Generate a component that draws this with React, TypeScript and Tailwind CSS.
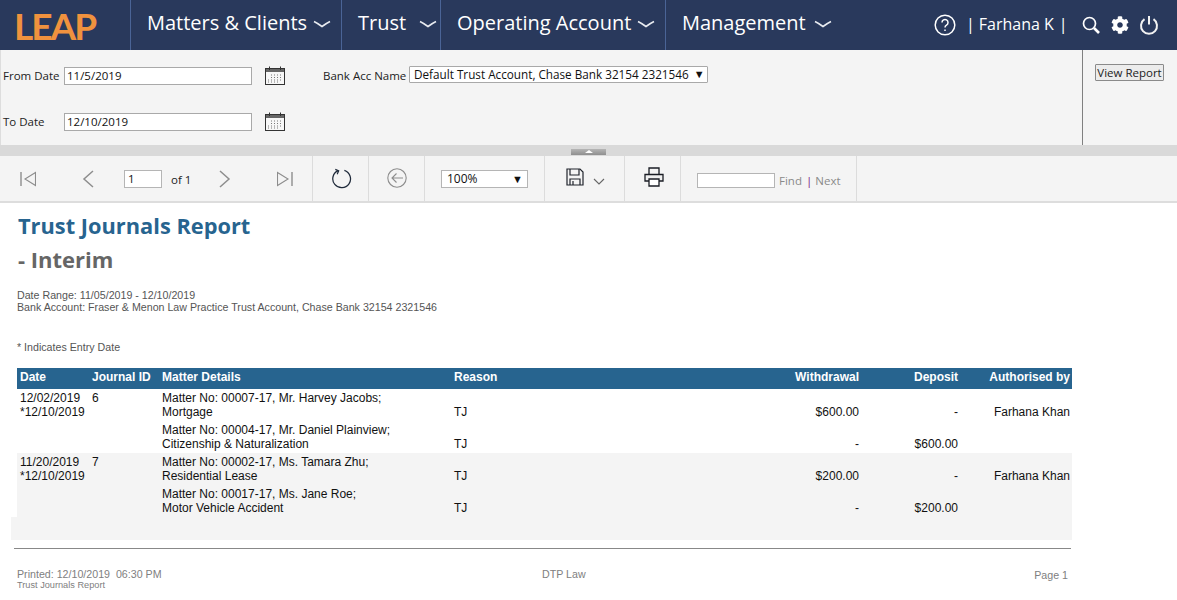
import { FaCog } from "react-icons/fa";

const navFont = "font-['Open_Sans',sans-serif]";
const reportFont = "font-['Liberation_Sans',Arial,sans-serif]";

function Chevron({ className }: { className?: string }) {
  return (
    <svg viewBox="0 0 18 8" fill="none" className={className}>
      <path d="M1 1.5 C4 3 7 5 9 6.5 C11 5 14 3 17 1.5" stroke="currentColor" strokeWidth="1.6" />
    </svg>
  );
}

function NavItem({ label, width, labelWidth, gap }: { label: string; width: string; labelWidth: string; gap: string }) {
  return (
    <div className={`flex h-full items-center border-l border-[#4a6496] pb-[5px] pl-[16px] ${width}`}>
      <span className={`text-[20px] leading-none whitespace-nowrap text-white ${labelWidth}`}>{label}</span>
      <Chevron className={`mt-[3px] h-[8px] w-[18px] text-[#e8ebf0] ${gap}`} />
    </div>
  );
}

function CalendarIcon({ className }: { className?: string }) {
  return (
    <svg viewBox="0 0 20 19" className={className}>
      <rect x="0.5" y="2.5" width="19" height="16" fill="#f7f7f7" stroke="#333" />
      <rect x="1" y="3" width="18" height="3" fill="#666" />
      <path d="M4.5 0.5v3.5M15.5 0.5v3.5" stroke="#333" />
      <path d="M6 9h1M9 9h1M12 9h1M15 9h1M6 11.500h1M9 11.500h1M12 11.500h1M15 11.500h1M3 14h1M6 14h1M9 14h1M12 14h1M15 14h1M3 16h1M6 16h1M9 16h1M12 16h1" stroke="#777" />
    </svg>
  );
}

function FilterPanel() {
  return (
    <div className={`flex h-[95px] bg-[#f4f4f4] ${navFont} text-[11.5px] text-[#222]`}>
      <div className="flex w-[1082px] border-l border-[#dddddd]">
        <div className="flex flex-col gap-[29px] pt-[17px] pl-[2px]">
          <div className="flex h-[17px] items-center">
            <span className="w-[61px] whitespace-nowrap">From Date</span>
            <div className="flex h-[18px] w-[188px] items-center border border-[#a9a9a9] bg-white pl-[2px] text-[#111]">11/5/2019</div>
            <CalendarIcon className="ml-[13px] h-[19px] w-[20px]" />
          </div>
          <div className="flex h-[17px] items-center">
            <span className="w-[61px] whitespace-nowrap">To Date</span>
            <div className="flex h-[18px] w-[188px] items-center border border-[#a9a9a9] bg-white pl-[2px] text-[#111]">12/10/2019</div>
            <CalendarIcon className="ml-[13px] h-[19px] w-[20px]" />
          </div>
        </div>
        <div className="mt-[16px] ml-[38px] flex h-[17px] items-center">
          <span className="mt-[2px] w-[86px] whitespace-nowrap">Bank Acc Name</span>
          <div className="flex h-[17px] w-[299px] items-center rounded-[1px] border border-[#a9a9a9] bg-white pl-[4px] text-[11.72px] whitespace-nowrap text-[#111]">
            Default Trust Account, Chase Bank 32154 2321546
            <span className="mb-[2px] ml-[5px] text-[11px] leading-none">▼</span>
          </div>
        </div>
      </div>
      <div className="flex flex-1 border-l border-[#808080] pt-[14px] pl-[12px]">
        <div className="flex h-[17px] w-[69px] items-center justify-center rounded-[1px] border border-[#8a8a8a] bg-[#ececec] whitespace-nowrap text-[11.5px] text-[#222]">View Report</div>
      </div>
    </div>
  );
}

function Splitter() {
  return (
    <div className="flex h-[11px] justify-center bg-[#d9d9d9] pt-[4px]">
      <div className="flex h-[6px] w-[35px] justify-center bg-gradient-to-b from-[#b5b5b5] to-[#8f8f8f] pt-[1px]">
        <div className="h-0 w-0 border-x-[4px] border-b-[3px] border-x-transparent border-b-white" />
      </div>
    </div>
  );
}

function Section({ width, children, className }: { width: string; children: React.ReactNode; className?: string }) {
  return <div className={`flex h-full items-center border-r border-[#dcdcdc] ${width} ${className ?? ""}`}>{children}</div>;
}

function Toolbar() {
  return (
    <div className={`flex h-[47px] border-b-2 border-[#dddddd] bg-[#f4f4f4] ${navFont} text-[11.5px] text-[#222]`}>
      <Section width="w-[313px]">
        <svg viewBox="0 0 16 16" fill="none" stroke="#8d8d8d" className="ml-[20px] h-[16px] w-[16px]">
          <path d="M1 1v14" strokeWidth="1.4" />
          <path d="M15.500 1.500 5 8l10.500 6.500z" strokeWidth="1.1" />
        </svg>
        <svg viewBox="0 0 12 18" fill="none" stroke="#8d8d8d" strokeWidth="1.5" className="ml-[46px] h-[18px] w-[12px]">
          <path d="M11 1 2 9l9 8" />
        </svg>
        <div className="mt-[1px] ml-[30px] flex h-[18px] w-[38px] items-center border border-[#b5b5b5] bg-white pl-[3px] text-[#111]">1</div>
        <span className="mt-[2px] ml-[9px] whitespace-nowrap">of 1</span>
        <svg viewBox="0 0 12 18" fill="none" stroke="#8d8d8d" strokeWidth="1.5" className="ml-[28px] h-[18px] w-[12px]">
          <path d="m1 1 9 8-9 8" />
        </svg>
        <svg viewBox="0 0 16 16" fill="none" stroke="#8d8d8d" className="ml-[46px] h-[16px] w-[16px]">
          <path d="M15 1v14" strokeWidth="1.4" />
          <path d="M.5 1.500 11 8 .5 14.500z" strokeWidth="1.1" />
        </svg>
      </Section>
      <Section width="w-[56px]" className="justify-center pb-[1px] pl-[2px]">
        <svg viewBox="0 0 22 22" fill="none" stroke="#1f2a3a" strokeWidth="1.3" className="h-[21px] w-[21px]">
          <path d="M7.500 2.800A9.300 9.300 0 1 0 14 2.500" />
          <path d="M4.500 1.500 8 3 6.500 6.500" />
        </svg>
      </Section>
      <Section width="w-[56px]" className="justify-center pb-[2px] pl-[1px]">
        <svg viewBox="0 0 20 20" fill="none" stroke="#8d8d8d" strokeWidth="1.1" className="h-[20px] w-[20px]">
          <circle cx="10" cy="10" r="9.200" />
          <path d="M16 10H5M9.500 5.500 5 10l4.500 4.500" />
        </svg>
      </Section>
      <Section width="w-[120px]" className="pl-[16px]">
        <div className="mt-[1px] flex h-[18px] w-[87px] items-center justify-between border border-[#b5b5b5] bg-white pr-[4px] pl-[5px] text-[12px] text-[#111]">
          100%
          <span className="mb-[2px] text-[11px] leading-none">▼</span>
        </div>
      </Section>
      <Section width="w-[80px]" className="pl-[21px]">
        <svg viewBox="0 0 18 18" fill="none" stroke="#20242c" strokeWidth="1.2" className="mt-[-4px] h-[18px] w-[18px]">
          <path d="M1 1h13l3 3v13H1z" />
          <path d="M4 1v6h9V1M4 17v-6h10v6M7 13v4" />
        </svg>
        <svg viewBox="0 0 12 7" fill="none" stroke="#666" strokeWidth="1.1" className="mt-[5px] ml-[9px] h-[7px] w-[12px]">
          <path d="m1 1 5 5 5-5" />
        </svg>
      </Section>
      <Section width="w-[56px]" className="pl-[19px]">
        <svg viewBox="0 0 20 20" fill="none" stroke="#1a1d24" strokeWidth="1.3" className="mt-[-4px] h-[20px] w-[20px]">
          <path d="M5 7V1h10v6" />
          <path d="M5 14H1V7.500h18V14h-4" fill="#f0f0f0" />
          <path d="M5 12h10v7H5z" fill="#fff" />
        </svg>
      </Section>
      <Section width="w-[176px]" className="pt-[4px] pl-[16px]">
        <div className="h-[15px] w-[78px] border border-[#b5b5b5] bg-white" />
        <span className="ml-[4px] text-[#8a8a8a]">Find</span>
        <span className="ml-[4px] text-[#7a2a82]">|</span>
        <span className="ml-[3px] text-[#8a8a8a]">Next</span>
      </Section>
    </div>
  );
}

const gridCols = "grid grid-cols-[72px_70px_292px_189px_222px_99px_111px]";

type Entry = { matter: string; kind: string; reason: string; withdrawal: string; deposit: string; by?: string };

function EntryRow({ entry, date, entry2, journal }: { entry: Entry; date?: string; entry2?: string; journal?: string }) {
  return (
    <div className={`${gridCols} h-[32px] text-[12px] leading-[14px] text-[#111]`}>
      <div className="pt-[2px] pl-[3px]">
        {date}
        {entry2 && <div>{entry2}</div>}
      </div>
      <div className="pt-[2px] pl-[3px]">{journal}</div>
      <div className="pt-[2px] pl-[3px]">
        <div>{entry.matter}</div>
        <div>{entry.kind}</div>
      </div>
      <div className="pt-[16px] pl-[3px]">{entry.reason}</div>
      <div className="pt-[16px] pr-[3px] text-right">{entry.withdrawal}</div>
      <div className="pt-[16px] pr-[3px] text-right">{entry.deposit}</div>
      <div className="pt-[16px] pr-[2px] text-right">{entry.by}</div>
    </div>
  );
}

function JournalTable() {
  return (
    <div className="mt-[15px] w-[1055px]">
      <div className={`${gridCols} h-[21px] items-center bg-[#27648f] pb-[3px] text-[12px] font-bold text-white`}>
        <div className="pl-[3px]">Date</div>
        <div className="pl-[3px]">Journal ID</div>
        <div className="pl-[3px]">Matter Details</div>
        <div className="pl-[3px]">Reason</div>
        <div className="pr-[3px] text-right">Withdrawal</div>
        <div className="pr-[3px] text-right">Deposit</div>
        <div className="pr-[2px] text-right">Authorised by</div>
      </div>
      <div className="h-[64px]">
        <EntryRow
          date="12/02/2019"
          entry2="*12/10/2019"
          journal="6"
          entry={{ matter: "Matter No: 00007-17, Mr. Harvey Jacobs;", kind: "Mortgage", reason: "TJ", withdrawal: "$600.00", deposit: "-", by: "Farhana Khan" }}
        />
        <EntryRow entry={{ matter: "Matter No: 00004-17, Mr. Daniel Plainview;", kind: "Citizenship & Naturalization", reason: "TJ", withdrawal: "-", deposit: "$600.00" }} />
      </div>
      <div className="h-[64px] bg-[#f4f4f4]">
        <EntryRow
          date="11/20/2019"
          entry2="*12/10/2019"
          journal="7"
          entry={{ matter: "Matter No: 00002-17, Ms. Tamara Zhu;", kind: "Residential Lease", reason: "TJ", withdrawal: "$200.00", deposit: "-", by: "Farhana Khan" }}
        />
        <EntryRow entry={{ matter: "Matter No: 00017-17, Ms. Jane Roe;", kind: "Motor Vehicle Accident", reason: "TJ", withdrawal: "-", deposit: "$200.00" }} />
      </div>
      <div className="ml-[-6px] h-[23px] bg-[#f4f4f4]" />
      <div className="mt-[8px] ml-[-3px] h-[1px] w-[1057px] bg-[#888888]" />
    </div>
  );
}

export default function App() {
  return (
    <div className="h-[600px] w-[1177px] overflow-hidden bg-white">
      <header className={`flex h-[50px] bg-[#29395c] ${navFont}`}>
        <div className="flex w-[130px] items-center pl-[14px]">
          <span className="font-['Lato',sans-serif] text-[37px] leading-none font-bold tracking-[-2px] text-[#f0923e]">LEAP</span>
        </div>
        <NavItem label="Matters & Clients" width="w-[211px]" labelWidth="w-[160px]" gap="ml-[6px]" />
        <NavItem label="Trust" width="w-[99px]" labelWidth="w-[48px]" gap="ml-[13px]" />
        <NavItem label="Operating Account" width="w-[225px]" labelWidth="w-[174px]" gap="ml-[6px]" />
        <NavItem label="Management" width="w-[262px]" labelWidth="w-[123px]" gap="ml-[9px]" />
        <div className="flex items-center pb-[1px] text-white">
          <svg viewBox="0 0 22 22" fill="none" stroke="white" strokeWidth="1.500" className="ml-[7px] h-[22px] w-[22px]">
            <circle cx="11" cy="11" r="9.800" />
            <path d="M8 8.500a3 3 0 1 1 4.500 2.600c-1 .6-1.500 1.100-1.500 2.400" />
            <path d="M11 15.500v1.600" />
          </svg>
          <span className="ml-[10px] pb-[2px] text-[16px] whitespace-nowrap">|</span>
          <span className="ml-[4px] pb-[2px] text-[16px] whitespace-nowrap">Farhana K</span>
          <span className="ml-[5px] pb-[2px] text-[16px] whitespace-nowrap">|</span>
          <svg viewBox="0 0 18 18" fill="none" stroke="white" className="ml-[14px] h-[18px] w-[18px]">
            <circle cx="7.500" cy="7.500" r="6" strokeWidth="1.700" />
            <path d="m12 12 5 5" strokeWidth="2.600" />
          </svg>
          <FaCog className="ml-[11px] h-[18px] w-[18px]" />
          <svg viewBox="0 0 20 20" fill="none" stroke="#f2f2f2" strokeWidth="2" className="ml-[10px] h-[20px] w-[20px]">
            <path d="M5.500 4.200a8 8 0 1 0 9 0" />
            <path d="M10 1v8.500" />
          </svg>
        </div>
      </header>
      <FilterPanel />
      <Splitter />
      <Toolbar />
      <main className={`pl-[17px] ${reportFont}`}>
        <h1 className={`mt-[9px] ml-[1px] ${navFont} text-[21.8px] leading-[28px] font-bold text-[#27648f]`}>Trust Journals Report</h1>
        <h2 className={`mt-[5px] ml-[1px] ${navFont} text-[22px] leading-[28px] font-bold text-[#666666]`}>- Interim</h2>
        <div className="mt-[16px] text-[10.66px] leading-[12px] text-[#555555]">
          <p>Date Range: 11/05/2019 - 12/10/2019</p>
          <p>Bank Account: Fraser &amp; Menon Law Practice Trust Account, Chase Bank 32154 2321546</p>
        </div>
        <p className="mt-[28px] text-[10.66px] leading-[12px] text-[#555555]">* Indicates Entry Date</p>
        <JournalTable />
        <div className="relative mt-[19px] h-[30px] w-[1055px]">
          <p className="text-[10.66px] leading-[12px] text-[#808080]">Printed: 12/10/2019 &nbsp;06:30 PM</p>
          <p className="text-[9.2px] leading-[10px] text-[#808080]">Trust Journals Report</p>
          <p className="absolute top-0 left-[525px] text-[10.66px] leading-[12px] text-[#808080]">DTP Law</p>
          <p className="absolute top-0 right-[4px] text-[10.66px] leading-[14px] text-[#808080]">Page 1</p>
        </div>
      </main>
    </div>
  );
}
